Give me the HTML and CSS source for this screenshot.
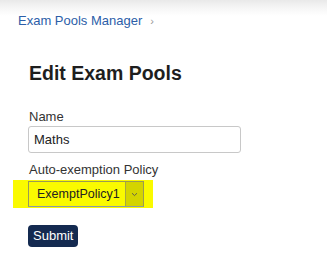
FILE: index.html
```html
<!DOCTYPE html>
<html>
<head>
<meta charset="utf-8">
<link rel="stylesheet" href="styles.css">
</head>
<body>
<div class="topbar">
  <nav class="crumb"><a class="crumb-link">Exam Pools Manager</a><span class="crumb-sep">›</span></nav>
</div>
<main class="content">
  <h1 class="title">Edit Exam Pools</h1>
  <label class="label">Name</label>
  <div class="input">Maths</div>
  <label class="label label-second">Auto-exemption Policy</label>
  <div class="highlight">
    <div class="select">
      <span class="select-value">ExemptPolicy1</span>
      <span class="select-btn"><svg width="7" height="5" viewBox="0 0 7 5"><path d="M1 1.2 L3.5 3.6 L6 1.2" fill="none" stroke="#555" stroke-width="0.9"/></svg></span>
    </div>
  </div>
  <button class="submit">Submit</button>
</main>
</body>
</html>
```
FILE: styles.css
```css
html, body {
  margin: 0;
  padding: 0;
}
body {
  width: 327px;
  height: 276px;
  background: linear-gradient(#e9e9e9 0px, #f6f6f6 8px, #ffffff 16px);
  font-family: "Liberation Sans", Arial, sans-serif;
  color: #333;
  overflow: hidden;
}
.topbar {
  padding-top: 13px;
}
.crumb {
  margin-left: 18px;
  font-size: 13px;
  line-height: 16px;
  display: flex;
  align-items: center;
}
.crumb-link {
  color: #2c5ea8;
}
.crumb-sep {
  color: #999;
  font-size: 11px;
  margin-left: 8px;
}
.content {
  padding-left: 28px;
  display: flex;
  flex-direction: column;
  align-items: flex-start;
}
.title {
  margin: 32px 0 0 1px;
  font-size: 19.5px;
  line-height: 24px;
  font-weight: bold;
  color: #1e1e1e;
}
.label {
  display: block;
  font-size: 13px;
  line-height: 16px;
  color: #333;
  margin-top: 24px;
  margin-left: 1px;
}
.label-second {
  margin-top: 9px;
}
.input {
  box-sizing: border-box;
  width: 213px;
  height: 27px;
  margin-top: 1px;
  border: 1px solid #c8c8c8;
  border-radius: 3px;
  background: #fff;
  font-size: 13px;
  line-height: 25px;
  padding-left: 5px;
  color: #222;
}
.highlight {
  margin-top: 2px;
  margin-left: -15px;
  padding: 1px 9px 1px 15px;
  background: #fafa00;
}
.select {
  box-sizing: border-box;
  width: 116px;
  height: 26px;
  border: 1px solid #9a9a55;
  border-bottom-color: #8a9aa8;
  display: flex;
  align-items: stretch;
  background: #fafa00;
}
.select-value {
  flex: 1;
  font-size: 12.5px;
  line-height: 24px;
  padding-left: 8px;
  color: #222;
}
.select-btn {
  width: 17px;
  background: #d4d400;
  border-left: 1px solid #a8a840;
  display: flex;
  align-items: center;
  justify-content: center;
}
.submit {
  margin-top: 17px;
  height: 22px;
  padding: 0 5px;
  border: none;
  border-radius: 4px;
  background: #142a50;
  color: #fff;
  font-family: "Liberation Sans", Arial, sans-serif;
  font-size: 13px;
  line-height: 22px;
}
```
